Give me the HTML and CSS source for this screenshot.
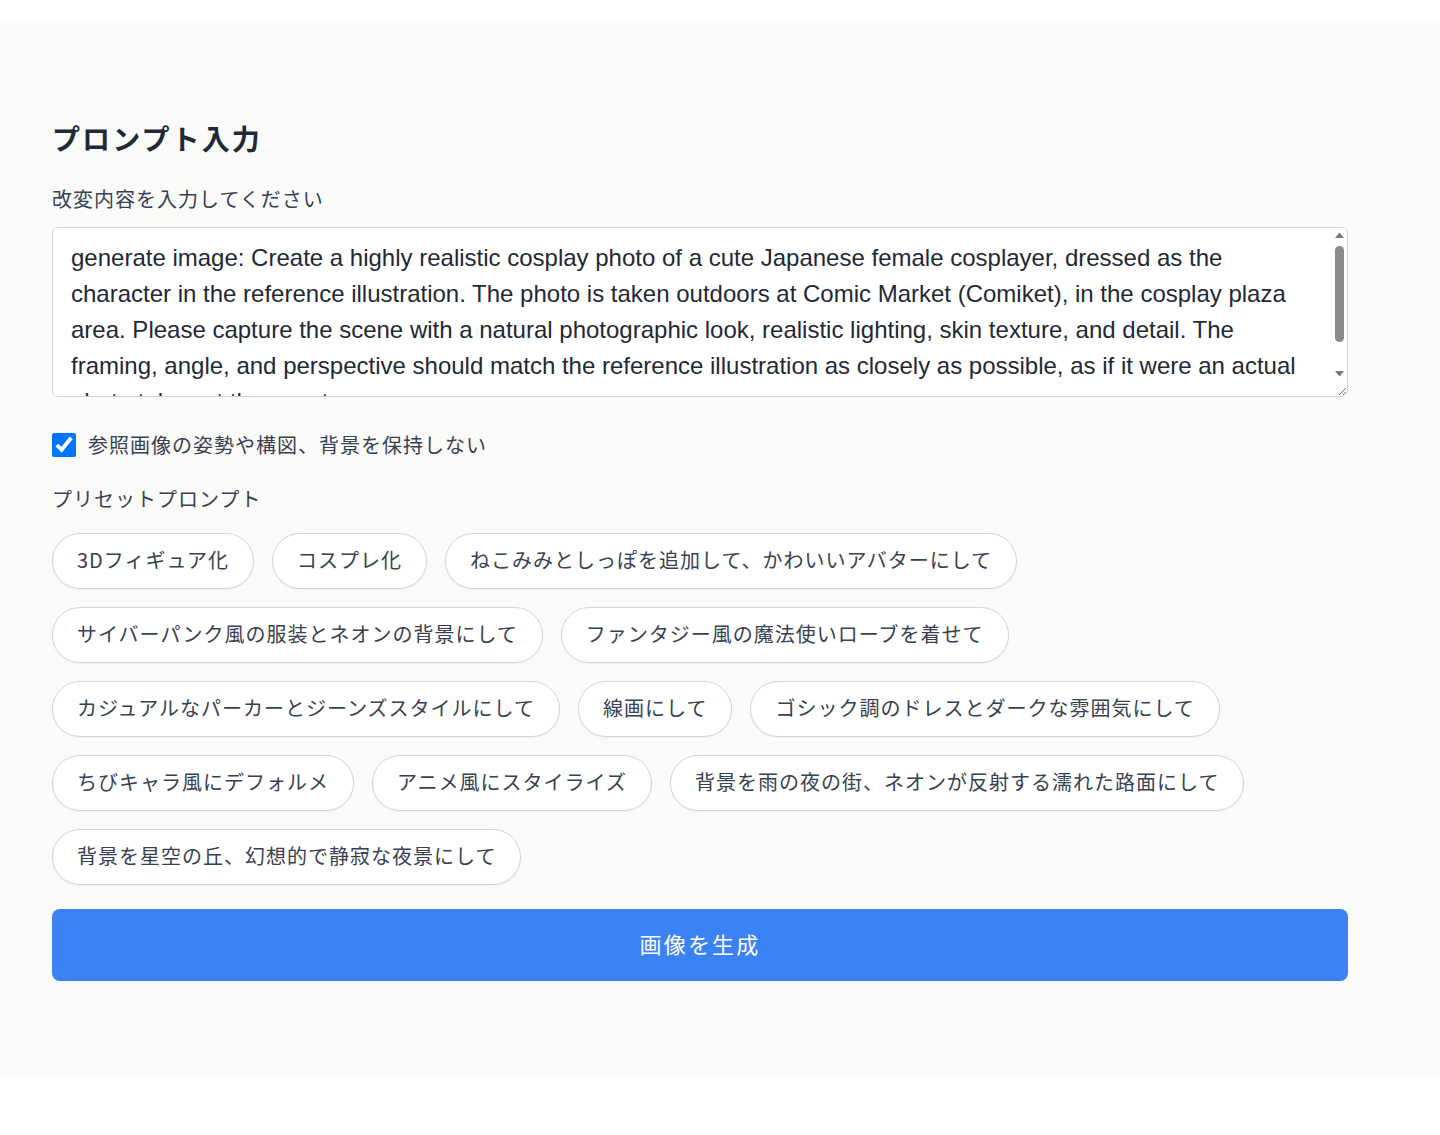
FILE: index.html
```html
<!DOCTYPE html>
<html lang="ja">
<head>
    <meta charset="UTF-8">
    <meta name="viewport" content="width=device-width, initial-scale=1.0">
    <title>プロンプト入力</title>
    <link rel="stylesheet" href="styles.css">
</head>
<body>
    <div class="panel">
        <div class="panel-inner">
            <h2 class="panel-title">プロンプト入力</h2>

            <label class="field-label" for="prompt">改変内容を入力してください</label>
            <div class="prompt-wrap">
                <textarea id="prompt" class="prompt-input">generate image: Create a highly realistic cosplay photo of a cute Japanese female cosplayer, dressed as the character in the reference illustration. The photo is taken outdoors at Comic Market (Comiket), in the cosplay plaza area. Please capture the scene with a natural photographic look, realistic lighting, skin texture, and detail. The framing, angle, and perspective should match the reference illustration as closely as possible, as if it were an actual photo taken at the event.</textarea>
                <!-- スクロールバー（見た目のみ） -->
                <div class="scrollbar" aria-hidden="true">
                    <svg class="scroll-arrow" width="15" height="15" viewBox="0 0 15 15"><polygon points="7.5,4.5 12,10 3,10" fill="#7a7a7a"/></svg>
                    <div class="scroll-thumb"></div>
                    <svg class="scroll-arrow down" width="15" height="15" viewBox="0 0 15 15"><polygon points="3,5 12,5 7.5,10.5" fill="#7a7a7a"/></svg>
                </div>
            </div>

            <label class="check-row">
                <input type="checkbox" checked>
                <span>参照画像の姿勢や構図、背景を保持しない</span>
            </label>

            <div class="field-label">プリセットプロンプト</div>
            <div class="preset-list">
                <button class="preset">3Dフィギュア化</button>
                <button class="preset">コスプレ化</button>
                <button class="preset">ねこみみとしっぽを追加して、かわいいアバターにして</button>
                <button class="preset">サイバーパンク風の服装とネオンの背景にして</button>
                <button class="preset">ファンタジー風の魔法使いローブを着せて</button>
                <button class="preset">カジュアルなパーカーとジーンズスタイルにして</button>
                <button class="preset">線画にして</button>
                <button class="preset">ゴシック調のドレスとダークな雰囲気にして</button>
                <button class="preset">ちびキャラ風にデフォルメ</button>
                <button class="preset">アニメ風にスタイライズ</button>
                <button class="preset">背景を雨の夜の街、ネオンが反射する濡れた路面にして</button>
                <button class="preset">背景を星空の丘、幻想的で静寂な夜景にして</button>
            </div>

            <button class="generate">画像を生成</button>
        </div>
    </div>
</body>
</html>
```

FILE: styles.css
```css
body {
    margin: 0;
    background: #fff;
    font-family: "Noto Sans CJK JP", "Liberation Sans", sans-serif;
    color: #1f2937;
}

.panel {
    margin-top: 23px;
    padding: 95px 52px 96px;
    background: #fafaf9; /* 薄いグレー背景 */
}

.panel-inner {
    max-width: 1296px;
}

.panel-title {
    margin: 0 0 27px;
    font-size: 28px;
    line-height: 40px;
    font-weight: 700;
    letter-spacing: 0.075em;
    color: #1f2937;
}

.field-label {
    display: block;
    font-size: 20px;
    line-height: 28px;
    letter-spacing: 0.05em;
    color: #374151;
    margin-bottom: 14px;
}

.prompt-wrap {
    position: relative;
}

.prompt-input {
    display: block;
    box-sizing: border-box;
    width: 100%;
    height: 170px;
    margin: 0;
    padding: 12px 33px 12px 18px; /* 右側はスクロールバー分 */
    border: 1px solid #d1d5db;
    border-radius: 6px;
    background: #fff;
    font-family: "Liberation Sans", Arial, sans-serif;
    font-size: 24px;
    line-height: 36px;
    color: #1f2937;
    resize: vertical;
}

.scrollbar {
    position: absolute;
    top: 1px;
    right: 1px;
    bottom: 16px;
    width: 15px;
    display: flex;
    flex-direction: column;
    align-items: center;
    background: #fff;
    border-top-right-radius: 5px;
}

.scroll-arrow {
    display: block;
    flex-shrink: 0;
}

.scroll-arrow.down {
    margin-top: auto;
}

.scroll-thumb {
    width: 9px;
    height: 96px;
    margin-top: 3px;
    border-radius: 5px;
    background: #8a8a8a;
}

.check-row {
    display: flex;
    align-items: center;
    gap: 12px;
    margin: 34px 0 26px;
    font-size: 20px;
    line-height: 28px;
    letter-spacing: 0.05em;
    color: #374151;
}

.check-row input {
    width: 24px;
    height: 24px;
    margin: 0;
}

.preset-list {
    display: flex;
    flex-wrap: wrap;
    gap: 18px;
    margin-top: 20px;
}

.preset {
    height: 56px;
    padding: 0 24px 3px;
    border: 1px solid #d1d5db;
    border-radius: 28px;
    background: #fff;
    box-shadow: 0 1px 2px rgba(0, 0, 0, 0.05);
    font-family: "Noto Sans CJK JP", "Liberation Sans", sans-serif;
    font-size: 20px;
    letter-spacing: 0.05em;
    color: #374151;
    cursor: pointer;
}

.generate {
    display: block;
    width: 100%;
    height: 72px;
    margin-top: 24px;
    padding-bottom: 5px;
    border: none;
    border-radius: 8px;
    background: #3b82f6;
    color: #fff;
    font-family: "Noto Sans CJK JP", "Liberation Sans", sans-serif;
    font-size: 22px;
    letter-spacing: 0.1em;
    cursor: pointer;
}
```
